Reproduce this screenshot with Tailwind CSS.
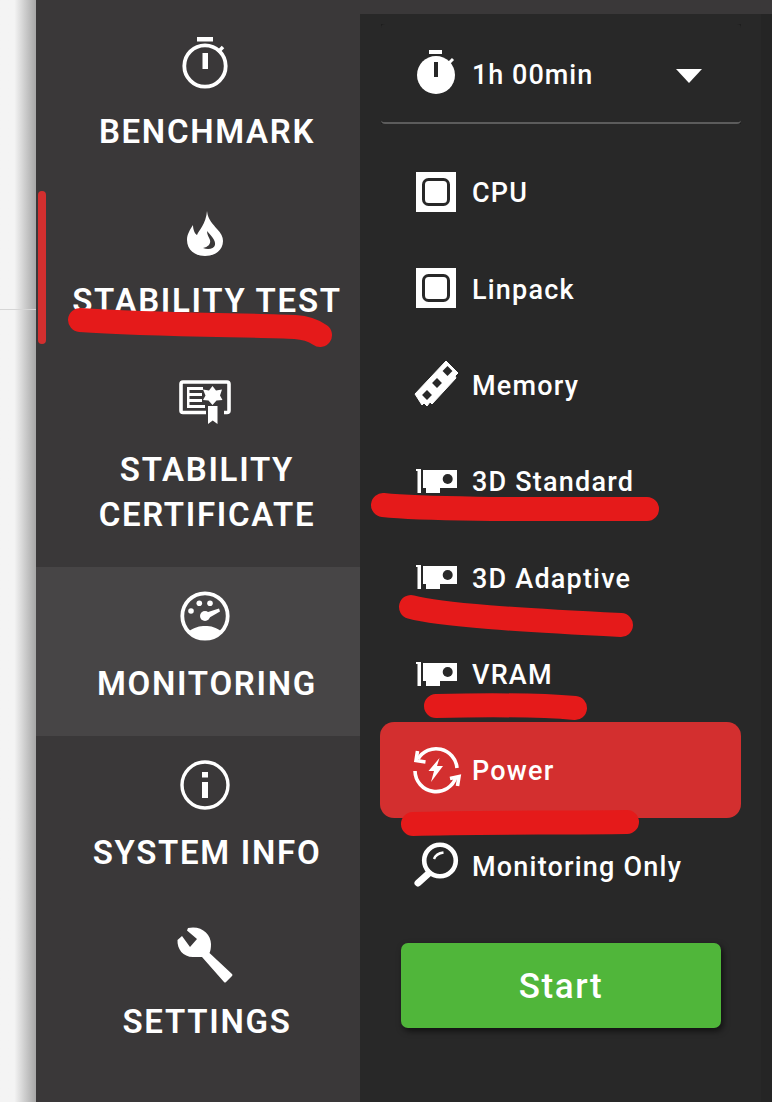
<!DOCTYPE html>
<html lang="en">
<head>
  <meta charset="UTF-8" />
  <title>Stability Test</title>
  <script src="https://cdn.jsdelivr.net/npm/@tailwindcss/browser@4"></script>
</head>
<body class="bg-[#f2f2f2] overflow-hidden font-['Roboto',sans-serif] text-white">
  <div class="relative flex h-[1102px] w-[772px]">

    <!-- window behind -->
    <div class="w-[36px] shrink-0 bg-linear-to-r from-[#f4f4f4] from-40% to-[#a6a6a6] pt-[309px]">
      <div class="h-px bg-[#d6d6d6]"></div>
    </div>

    <!-- sidebar -->
    <nav class="relative w-[324px] shrink-0 bg-[#3a3839] pt-[15px] pl-[18px] text-[33px] font-semibold tracking-[1.7px] leading-[45px]">
      <div class="absolute left-[2px] top-[191px] h-[153px] w-[8px] rounded-full bg-[#d32f2f]"></div>

      <div class="-ml-[18px] pl-[18px] h-[169px] pt-[19px] flex flex-col items-center">
        <svg class="mr-[4px]" width="60" height="60" viewBox="0 0 60 60" fill="white">
          <circle cx="30" cy="32" r="20.7" fill="none" stroke="white" stroke-width="3.8" />
          <rect x="22" y="3" width="16" height="4.5" />
          <rect x="27.5" y="19" width="5.5" height="16" />
          <path d="M43 18 L48 13" stroke="white" stroke-width="3.5" />
        </svg>
        <span class="mt-[15px]">BENCHMARK</span>
      </div>

      <div class="-ml-[18px] pl-[18px] h-[169px] pt-[19px] flex flex-col items-center">
        <svg class="mr-[4px]" width="60" height="60" viewBox="0 0 60 60" fill="white">
          <path d="M32 8 C33 17 38 21 42 26 C46 30 48 34 48 38 C48 47 40 53 30 53 C20 53 12 47 12 37 C12 31 15 27 18 22 C18 27 20 31 22 32 C24 27 31 21 32 8 Z" />
          <path d="M32 28 C36 33 41 37 40 42 C39 46 33 47 28 45 C33 44 36 41 35 37 C34 34 32 32 32 28 Z" fill="#3a3839" />
        </svg>
        <span class="mt-[15px]">STABILITY TEST</span>
      </div>

      <div class="-ml-[18px] pl-[18px] h-[214px] pt-[19px] flex flex-col items-center">
        <svg class="mr-[4px]" width="60" height="60" viewBox="0 0 60 60" fill="white">
          <path d="M31 40.5 H8 Q6 40.5 6 38.5 V12 Q6 10 8 10 H52 Q54 10 54 12 V38.5 Q54 40.5 52 40.5 H49" fill="none" stroke="white" stroke-width="3.6" />
          <rect x="12" y="15" width="16" height="3" />
          <rect x="12" y="21" width="15" height="3" />
          <rect x="12" y="27" width="15" height="3" />
          <rect x="12" y="33" width="18" height="3" />
          <rect x="12" y="15" width="2.5" height="20" />
          <path d="M37.5 14 L41 18.5 L47 17.5 L45 23.5 L47.5 28 L41.5 28.5 L37.5 33 L33.5 28.5 L28 28 L30.5 23.5 L28 17.5 L34 18.5 Z" />
          <path d="M33 34 H42.5 V52 L37.7 48.5 L33 52 Z" />
        </svg>
        <span class="mt-[15px] text-center">STABILITY<br />CERTIFICATE</span>
      </div>

      <div class="-ml-[18px] pl-[18px] h-[169px] pt-[19px] flex flex-col items-center bg-[#474546]">
        <svg class="mr-[4px]" width="60" height="60" viewBox="0 0 60 60" fill="white">
          <circle cx="30" cy="30" r="22.7" fill="none" stroke="white" stroke-width="3.8" />
          <circle cx="16" cy="25" r="2.8" />
          <circle cx="24.3" cy="17.3" r="2.8" />
          <circle cx="35" cy="17.3" r="2.8" />
          <circle cx="30" cy="30" r="5" />
          <path d="M30 27 L44 22.5 L45 25.5 L32 33 Z" />
          <path d="M13 46 C19 41 25 40 30 40 C36 40 41 41 47 46 C42 51 36 53 30 53 C24 53 18 51 13 46 Z" />
        </svg>
        <span class="mt-[15px]">MONITORING</span>
      </div>

      <div class="-ml-[18px] pl-[18px] h-[169px] pt-[19px] flex flex-col items-center">
        <svg class="mr-[4px]" width="60" height="60" viewBox="0 0 60 60" fill="white">
          <circle cx="30" cy="30" r="23" fill="none" stroke="white" stroke-width="3.4" />
          <rect x="27" y="17" width="6" height="5.5" />
          <rect x="27" y="27" width="6" height="16" />
        </svg>
        <span class="mt-[15px]">SYSTEM INFO</span>
      </div>

      <div class="-ml-[18px] pl-[18px] h-[169px] pt-[19px] flex flex-col items-center">
        <svg class="mr-[4px]" width="60" height="60" viewBox="0 0 60 60" fill="white">
          <path d="M13 4 C26 1 36 10 36 20 C36 24 35.5 27 34.5 29 L57 50 Q58 51 57 52 L51 58 Q50 59 49 58 L27 33 C23 33 21 33 18 33 C8 33 2 25 2.5 16 L7 12 L15 23 L22 15 L12 6.5 Z" />
        </svg>
        <span class="mt-[15px]">SETTINGS</span>
      </div>
    </nav>

    <!-- test panel -->
    <div class="w-[412px] shrink-0 bg-[#3a3839] pt-[14px]">
      <div class="flex h-[1088px] bg-[#282828]">
        <div class="w-[401px] pl-[21px] pr-[20px] pt-[10px]">

          <div class="w-[360px] bg-[#1d1d1d]">
            <div class="flex h-[100px] items-center rounded-[4px] border-b-2 border-[#5c5c5c] bg-[#282828] pl-[25px] pr-[39px]">
              <svg width="60" height="60" viewBox="0 0 60 60" fill="white">
                <circle cx="30" cy="32" r="19" />
                <rect x="23" y="7" width="13" height="4" />
                <rect x="28" y="19" width="4" height="15" fill="#282828" />
                <path d="M43 20 L47 16" stroke="white" stroke-width="3" />
              </svg>
              <span class="ml-[6px] flex-1 pt-[4px] text-[27px] font-medium tracking-[1px]">1h 00min</span>
              <svg class="mt-[6px]" width="26" height="14" viewBox="0 0 26 14" fill="white"><path d="M0 0 H26 L13 14 Z" /></svg>
            </div>
          </div>

          <ul class="mt-[20px] -ml-[1px] w-[361px] text-[27px] font-medium tracking-[1.2px]">
            <li class="flex h-[96.3px] items-center pl-[26px]">
              <svg width="60" height="60" viewBox="0 0 60 60">
                <rect x="10" y="10" width="40" height="40" fill="white" />
                <rect x="17.5" y="17.5" width="25" height="25" rx="5" fill="none" stroke="#282828" stroke-width="3" />
              </svg>
              <span class="ml-[6px] pt-[3px]">CPU</span>
            </li>
            <li class="flex h-[96.3px] items-center pl-[26px]">
              <svg width="60" height="60" viewBox="0 0 60 60">
                <rect x="10" y="10" width="40" height="40" fill="white" />
                <rect x="17.5" y="17.5" width="25" height="25" rx="5" fill="none" stroke="#282828" stroke-width="3" />
              </svg>
              <span class="ml-[6px] pt-[3px]">Linpack</span>
            </li>
            <li class="flex h-[96.3px] items-center pl-[26px]">
              <svg width="60" height="60" viewBox="0 0 60 60" fill="white">
                <path d="M40 6 L52 18 L49 21 L50 23 L26 49 L24 47 L21 51 L18 48 L16 50 L9 39 Z" stroke="white" stroke-width="1" stroke-linejoin="round" />
                <rect x="38" y="12.5" width="7" height="7" transform="rotate(45 41.5 16)" fill="#282828" />
                <rect x="27.5" y="24.5" width="7" height="7" transform="rotate(45 31 28)" fill="#282828" />
                <rect x="17.5" y="36.5" width="7" height="7" transform="rotate(45 21 40)" fill="#282828" />
              </svg>
              <span class="ml-[6px] pt-[3px]">Memory</span>
            </li>
            <li class="flex h-[96.3px] items-center pl-[26px]">
              <svg width="60" height="60" viewBox="0 0 60 60" fill="white">
                <path d="M10 18 H15 V42 H11.5 V20 H10 Z" />
                <path d="M17 19 H51 V37 H34 V42 H20 V37 H17 Z" />
                <circle cx="41.7" cy="28" r="5" fill="#282828" />
              </svg>
              <span class="ml-[6px] pt-[3px]">3D Standard</span>
            </li>
            <li class="flex h-[96.3px] items-center pl-[26px]">
              <svg width="60" height="60" viewBox="0 0 60 60" fill="white">
                <path d="M10 18 H15 V42 H11.5 V20 H10 Z" />
                <path d="M17 19 H51 V37 H34 V42 H20 V37 H17 Z" />
                <circle cx="41.7" cy="28" r="5" fill="#282828" />
              </svg>
              <span class="ml-[6px] pt-[3px]">3D Adaptive</span>
            </li>
            <li class="flex h-[96.3px] items-center pl-[26px]">
              <svg width="60" height="60" viewBox="0 0 60 60" fill="white">
                <path d="M10 18 H15 V42 H11.5 V20 H10 Z" />
                <path d="M17 19 H51 V37 H34 V42 H20 V37 H17 Z" />
                <circle cx="41.7" cy="28" r="5" fill="#282828" />
              </svg>
              <span class="ml-[6px] pt-[3px]">VRAM</span>
            </li>
            <li class="flex h-[96.3px] items-center rounded-[14px] bg-[#d32f2f] pl-[26px]">
              <svg width="60" height="60" viewBox="0 0 60 60" fill="none" stroke="white" stroke-width="3.6">
                <path d="M12 19 A21 21 0 0 1 51 28" />
                <path d="M9 31 A21 21 0 0 0 50 37" />
                <path d="M11.5 11 L10 20.5 L19.5 22" />
                <path d="M44 38.5 L53 36.5 L51.5 46" />
                <path d="M33.5 18 L22.5 31 H28 L25 42 L37 26 H31 Z" fill="white" stroke="none" />
              </svg>
              <span class="ml-[6px] pt-[3px]">Power</span>
            </li>
            <li class="flex h-[96.3px] items-center pl-[26px]">
              <svg width="60" height="60" viewBox="0 0 60 60" fill="none" stroke="white">
                <circle cx="34" cy="24.5" r="15.8" stroke-width="4.6" />
                <path d="M28 23 Q30 17.5 37.5 16.5" stroke-width="2.4" />
                <path d="M12 47 L22 38" stroke-width="7" stroke-linecap="round" />
              </svg>
              <span class="ml-[6px] pt-[3px]">Monitoring Only</span>
            </li>
          </ul>

          <button class="ml-[20px] mt-[29px] flex h-[85px] w-[320px] items-center justify-center rounded-[7px] bg-[#50b63a] pt-[2px] text-[35px] font-medium tracking-[1.6px] shadow-[2px_3px_6px_rgba(0,0,0,0.6)]">Start</button>
        </div>
        <div class="flex-1 bg-[#252525]"></div>
      </div>
    </div>

    <!-- hand drawn marks on the screenshot -->
    <svg class="absolute left-0 top-0 pointer-events-none" width="772" height="1102" viewBox="0 0 772 1102" fill="none" stroke="#e51a1a" stroke-width="24" stroke-linecap="round">
      <path d="M80 320 C150 325 250 325 295 327 Q310 328 320 335" />
      <path d="M383 505 C430 510 550 509 647 509" />
      <path d="M411 607 C440 615 520 620 621 625" />
      <path d="M436 706 C480 705 540 705 575 708" />
      <path d="M413 824 C470 822 560 823 627 822" />
    </svg>
  </div>
</body>
</html>
